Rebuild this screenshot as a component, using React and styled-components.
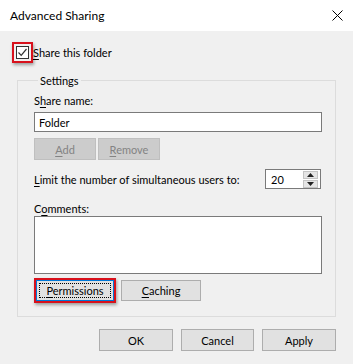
import React from "react";
import styled, { createGlobalStyle } from "styled-components";

const Global = createGlobalStyle`
  html, body { margin: 0; padding: 0; background: #f0f0f0; }
  body { font-family: "Segoe UI", Lato, "Liberation Sans", sans-serif; font-size: 11px; color: #000; }
`;

const Window = styled.div`
  width: 353px;
  height: 364px;
  background: #f0f0f0;
  overflow: hidden;
  display: flex;
  flex-direction: column;
`;

const TitleBar = styled.div`
  height: 31px;
  flex: none;
  background: #fff;
  display: flex;
  align-items: center;
  justify-content: space-between;
  padding: 0 10px 0 10px;
  font-size: 12px;
`;

const Body = styled.div`
  padding: 11px 17px 0 12px;
  display: flex;
  flex-direction: column;
`;

const CheckRow = styled.label`
  display: flex;
  align-items: center;
  height: 21px;
`;

const Highlight = styled.span`
  display: inline-flex;
  align-items: center;
  justify-content: center;
  border: 2px solid #d8111c;
  box-shadow: 1px 2px 3px rgba(0, 0, 0, 0.35);
  padding: ${(p) => p.$pad || "0"};
`;

const Box = styled.span`
  width: 11px;
  height: 11px;
  border: 1px solid #333;
  background: #fff;
  display: flex;
  align-items: center;
  justify-content: center;
`;

const Group = styled.fieldset`
  margin: 10px 0 0 5px;
  border: 1px solid #dcdcdc;
  padding: 5px 13px 13px 16px;
  display: flex;
  flex-direction: column;
  min-width: 0;
`;

const Legend = styled.legend`
  padding: 0 2px;
  margin-left: 4px;
  line-height: 15px;
`;

const Label = styled.div`
  line-height: 15px;
  margin-top: ${(p) => p.$mt || 0}px;
`;

const TextBox = styled.div`
  height: 18px;
  border: 1px solid #7a7a7a;
  background: #fff;
  display: flex;
  align-items: center;
  padding: 0 4px;
  margin-top: ${(p) => p.$mt || 0}px;
`;

const Area = styled.div`
  height: 56px;
  border: 1px solid #7a7a7a;
  background: #fff;
  margin-top: ${(p) => p.$mt || 0}px;
`;

const ButtonRow = styled.div`
  display: flex;
  align-items: center;
  gap: ${(p) => p.$gap || 2}px;
  margin-top: ${(p) => p.$mt || 0}px;
  justify-content: ${(p) => (p.$end ? "flex-end" : "flex-start")};
`;

const Button = styled.div`
  box-sizing: border-box;
  flex: none;
  width: ${(p) => p.$w}px;
  height: ${(p) => p.$h || 21}px;
  border: 1px solid ${(p) => (p.$disabled ? "#bfbfbf" : p.$focus ? "#0078d7" : "#adadad")};
  background: ${(p) => (p.$disabled ? "#cccccc" : "#e1e1e1")};
  color: ${(p) => (p.$disabled ? "#838383" : "#000")};
  display: flex;
  align-items: center;
  justify-content: center;
  position: relative;
`;

const FocusRect = styled.span`
  position: absolute;
  inset: 2px;
  border: 1px dotted #000;
`;

const LimitRow = styled.div`
  display: flex;
  align-items: center;
  justify-content: space-between;
  margin-top: 9px;
`;

const Spinner = styled.div`
  box-sizing: border-box;
  flex: none;
  width: 56px;
  height: 20px;
  border: 1px solid #7a7a7a;
  background: #fff;
  display: flex;
  align-items: center;
  justify-content: space-between;
  padding: 0 2px 0 5px;
  margin-right: 1px;
`;

const SpinButtons = styled.div`
  width: 15px;
  display: flex;
  flex-direction: column;
  gap: 1px;
`;

const SpinButton = styled.div`
  height: 8px;
  background: #e5e5e5;
  border: 1px solid #c4c4c4;
  box-sizing: border-box;
  display: flex;
  align-items: center;
  justify-content: center;
`;

const Key = styled.u`
  text-decoration-thickness: 1px;
  text-underline-offset: 2px;
`;

const Arrow = ({ up }) => (
  <svg width="7" height="4" viewBox="0 0 7 4">
    <path d={up ? "M0 4 L3.5 0 L7 4 Z" : "M0 0 L3.5 4 L7 0 Z"} fill="#222" />
  </svg>
);

export default function App() {
  return (
    <>
      <Global />
      <Window>
        <TitleBar>
          <span>Advanced Sharing</span>
          <svg width="11" height="11" viewBox="0 0 11 11">
            <path d="M0.5 0.5 L10.5 10.5 M10.5 0.5 L0.5 10.5" stroke="#000" strokeWidth="1" />
          </svg>
        </TitleBar>
        <Body>
          <CheckRow>
            <Highlight $pad="2px">
              <Box>
                <svg width="11" height="11" viewBox="0 0 11 11">
                  <path d="M1.5 5.5 L4.2 8.3 L9.5 2" stroke="#333" strokeWidth="1.2" fill="none" />
                </svg>
              </Box>
            </Highlight>
            <span><Key>S</Key>hare this folder</span>
          </CheckRow>
          <Group>
            <Legend>Settings</Legend>
            <Label>S<Key>h</Key>are name:</Label>
            <TextBox $mt={4}>Folder</TextBox>
            <ButtonRow $mt={6}>
              <Button $w={62} $h={22} $disabled><span><Key>A</Key>dd</span></Button>
              <Button $w={62} $h={22} $disabled><span><Key>R</Key>emove</span></Button>
            </ButtonRow>
            <LimitRow>
              <span><Key>L</Key>imit the number of simultaneous users to:</span>
              <Spinner>
                <span>20</span>
                <SpinButtons>
                  <SpinButton><Arrow up /></SpinButton>
                  <SpinButton><Arrow /></SpinButton>
                </SpinButtons>
              </Spinner>
            </LimitRow>
            <Label $mt={12}>C<Key>o</Key>mments:</Label>
            <Area />
            <ButtonRow $mt={4} $gap={5}>
              <Highlight>
                <Button $w={78} $focus>
                  <FocusRect />
                  <span><Key>P</Key>ermissions</span>
                </Button>
              </Highlight>
              <Button $w={80}><span><Key>C</Key>aching</span></Button>
            </ButtonRow>
          </Group>
          <ButtonRow $mt={12} $gap={8} $end>
            <Button $w={74} $h={22}>OK</Button>
            <Button $w={73} $h={22}>Cancel</Button>
            <Button $w={74} $h={22}>Apply</Button>
          </ButtonRow>
        </Body>
      </Window>
    </>
  );
}
